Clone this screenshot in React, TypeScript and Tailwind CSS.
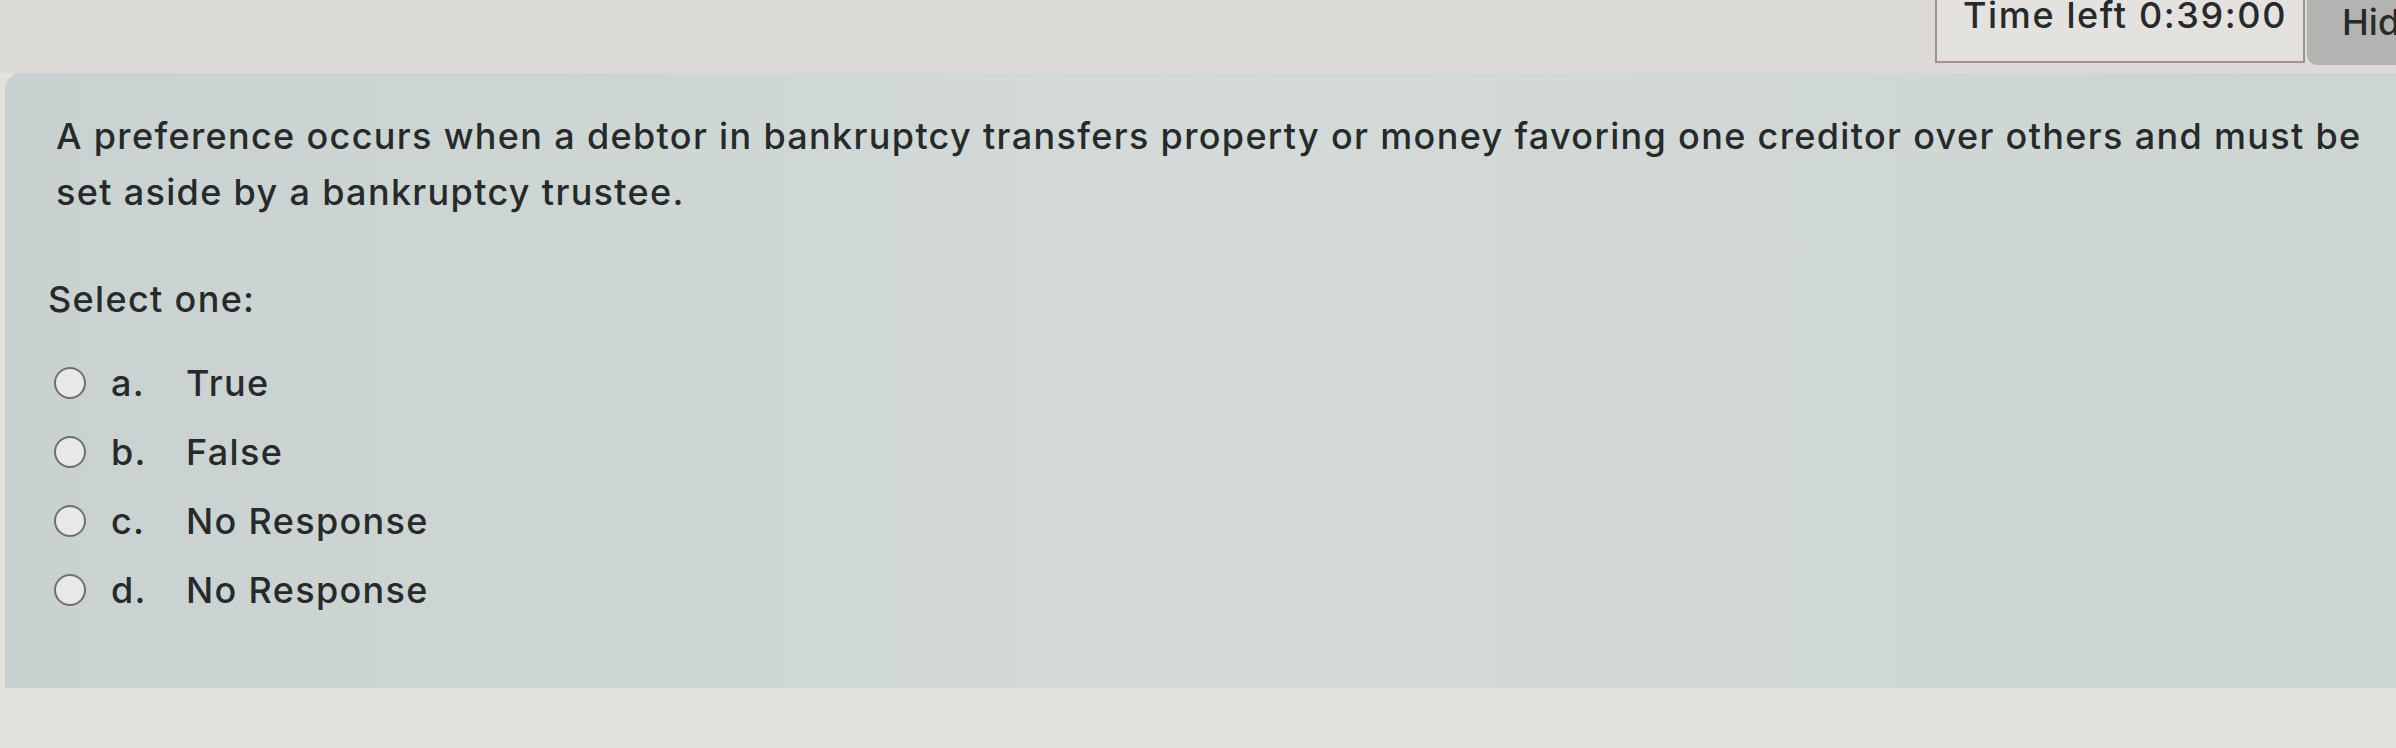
const options = [
  { letter: "a.", label: "True" },
  { letter: "b.", label: "False" },
  { letter: "c.", label: "No Response" },
  { letter: "d.", label: "No Response" },
];

function Radio() {
  return (
    <span className="flex h-[32px] w-[32px] shrink-0 rounded-full border-[2.5px] border-[#6c7071] bg-[#e8e9e7]" />
  );
}

export default function App() {
  return (
    <div className="flex h-[748px] w-full flex-col overflow-hidden bg-[#e2e1dc] font-['Inter',sans-serif] text-[#262a2b]">
      {/* top bar: timer + hide */}
      <header className="flex h-[73px] shrink-0 items-start justify-end bg-[#dddbd7]">
        <div className="flex h-[63px] w-[370px] items-start border-x-2 border-b-2 border-[#a58f88] bg-[#e4e2df] pl-[26px]">
          <span className="mt-[-3px] whitespace-nowrap text-[36px] font-medium leading-none tracking-[0.045em]">
            Time left 0:39:00
          </span>
        </div>
        <div className="ml-[2px] flex h-[65px] w-[89px] items-start overflow-hidden rounded-bl-[10px] bg-[#b3b4b2] pl-[35px]">
          <span className="mt-[4px] whitespace-nowrap text-[36px] font-medium leading-none">Hide</span>
        </div>
      </header>

      {/* question panel */}
      <main className="ml-[5px] h-[615px] shrink-0 rounded-tl-[16px] bg-linear-to-r from-[#c9d2d0] via-[#d3dad8] to-[#cdd5d3] pl-[51px] pt-[35px] text-[36px] font-medium tracking-[0.037em]">
        <p className="leading-[56px]">
          A preference occurs when a debtor in bankruptcy transfers property or money favoring one creditor over
          others and must be set aside by a bankruptcy trustee.
        </p>

        <div className="-ml-[8px] mt-[51px] leading-[56px]">Select one:</div>

        <div className="-ml-[2px] mt-[21px] flex flex-col">
          {options.map((o) => (
            <label key={o.letter} className="flex h-[69px] items-center">
              <Radio />
              <span className="ml-[25px] w-[75px]">{o.letter}</span>
              <span>{o.label}</span>
            </label>
          ))}
        </div>
      </main>
    </div>
  );
}
